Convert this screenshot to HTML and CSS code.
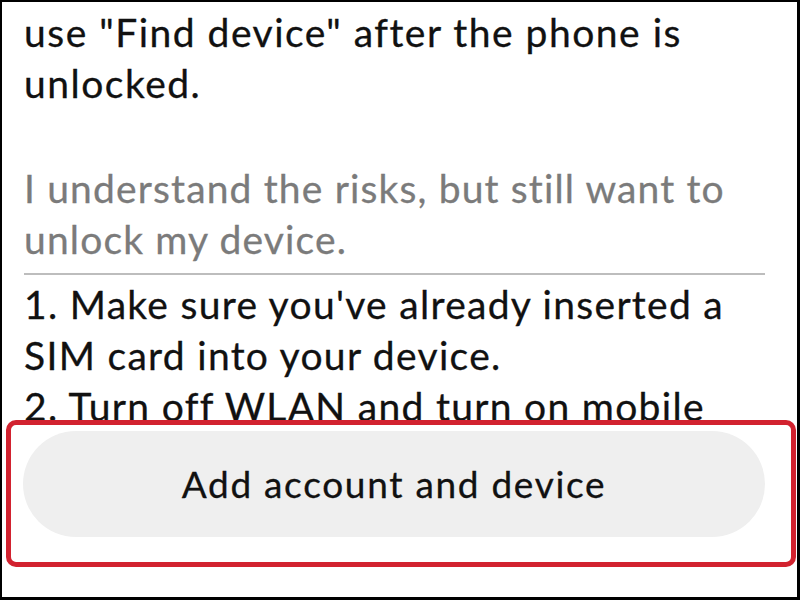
FILE: index.html
```html
<!DOCTYPE html>
<html lang="en">
<head>
<meta charset="utf-8">
<title>Unlock device</title>
<link rel="stylesheet" href="styles.css">
</head>
<body>
<div class="frame">
  <main class="scroll">
    <div class="content">
      <p class="para">use "Find device" after the phone is unlocked.</p>
      <p class="para muted">I understand the risks, but still want to unlock my device.</p>
      <hr class="divider">
      <p class="para list">1. Make sure you've already inserted a SIM card into your device.<br>2. Turn off WLAN and turn on mobile data.</p>
    </div>
  </main>
  <footer class="footer">
    <div class="highlight">
      <button class="pill" type="button">Add account and device</button>
    </div>
  </footer>
</div>
</body>
</html>
```

FILE: styles.css
```css
* { box-sizing: border-box; }
html, body { margin: 0; padding: 0; background: #000; }
body { width: 800px; height: 600px; overflow: hidden; }

.frame {
  width: 800px;
  height: 600px;
  border-style: solid;
  border-color: #000;
  border-width: 2px 3px 3px 2px;
  background: #fff;
  display: flex;
  flex-direction: column;
  font-family: Lato, "Noto Sans", sans-serif;
  color: #111;
}

.scroll {
  height: 418px;
  overflow: hidden;
  flex: none;
}

.content {
  padding: 5px 30px 0 22px;
}

.para {
  margin: 0;
  font-size: 39px;
  line-height: 51px;
  letter-spacing: 1.5px;
  -webkit-text-stroke: 0.3px #111;
}

.para + .para { margin-top: 54px; }

.muted {
  color: #7b7b7b;
  letter-spacing: 1.15px;
  -webkit-text-stroke: 0.3px #7b7b7b;
}

.divider {
  border: 0;
  height: 2px;
  background: #bdbdbd;
  margin: 8px 0 4px 0;
  width: 741px;
}

.list { letter-spacing: 1.3px; }

.footer {
  flex: 1;
  padding: 0 0 0 4px;
}

.highlight {
  border: 5px solid #d2222f;
  border-radius: 10px;
  padding: 6px 26px 25px 12px;
  width: 790px;
}

.pill {
  display: block;
  width: 100%;
  height: 106px;
  border: 0;
  border-radius: 53px;
  background: #efefef;
  font-family: Lato, "Noto Sans", sans-serif;
  font-size: 37px;
  color: #111;
  padding: 0 0 2px 0;
  letter-spacing: 1.7px;
  -webkit-text-stroke: 0.3px #111;
}
```
